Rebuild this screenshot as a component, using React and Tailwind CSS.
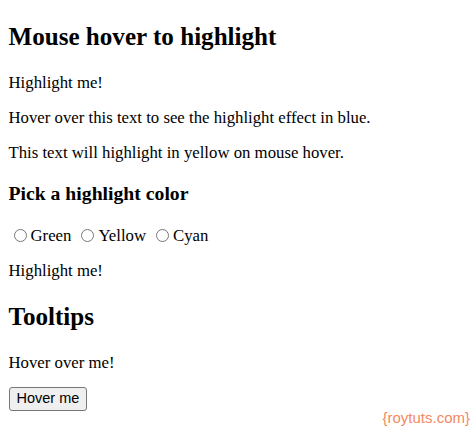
import React from "react";

function Radio({ label }) {
  return (
    <label className="inline-flex items-center mr-[5px]">
      <span className="inline-block w-[13px] h-[13px] rounded-full border border-[#767676] bg-white ml-[5px] mr-[4px]"></span>
      {label}
    </label>
  );
}

export default function App() {
  return (
    <div className="relative min-h-[430px] bg-white text-black font-['Liberation_Serif',serif] text-[16.75px] leading-[1.15] px-[8.5px] pt-[3px] pb-[8px]">
      <h2 className="text-[25.1px] font-bold mt-[20px] mb-[21px]">Mouse hover to highlight</h2>
      <p className="my-[16px]">Highlight me!</p>
      <p className="my-[16px]">Hover over this text to see the highlight effect in blue.</p>
      <p className="my-[16px]">This text will highlight in yellow on mouse hover.</p>

      <h3 className="text-[19.7px] font-bold mt-[19px] mb-[22px]">Pick a highlight color</h3>
      <div className="flex items-center">
        <Radio label="Green" />
        <Radio label="Yellow" />
        <Radio label="Cyan" />
      </div>
      <p className="mt-[15px] mb-[16px]">Highlight me!</p>

      <h2 className="text-[25.1px] font-bold mt-[23px] mb-[21px]">Tooltips</h2>
      <p className="mt-[16px] mb-[15px]">Hover over me!</p>
      <button className="font-['Liberation_Sans',sans-serif] text-[14.5px] leading-none px-[7px] pt-[3px] pb-[5px] bg-[#efefef] border border-[#767676] rounded-[3px]">
        Hover me
      </button>

      <div className="absolute right-[4px] bottom-[4px] font-['Liberation_Sans',sans-serif] text-[15px] text-[#f4895f]">
        {"{roytuts.com}"}
      </div>
    </div>
  );
}
